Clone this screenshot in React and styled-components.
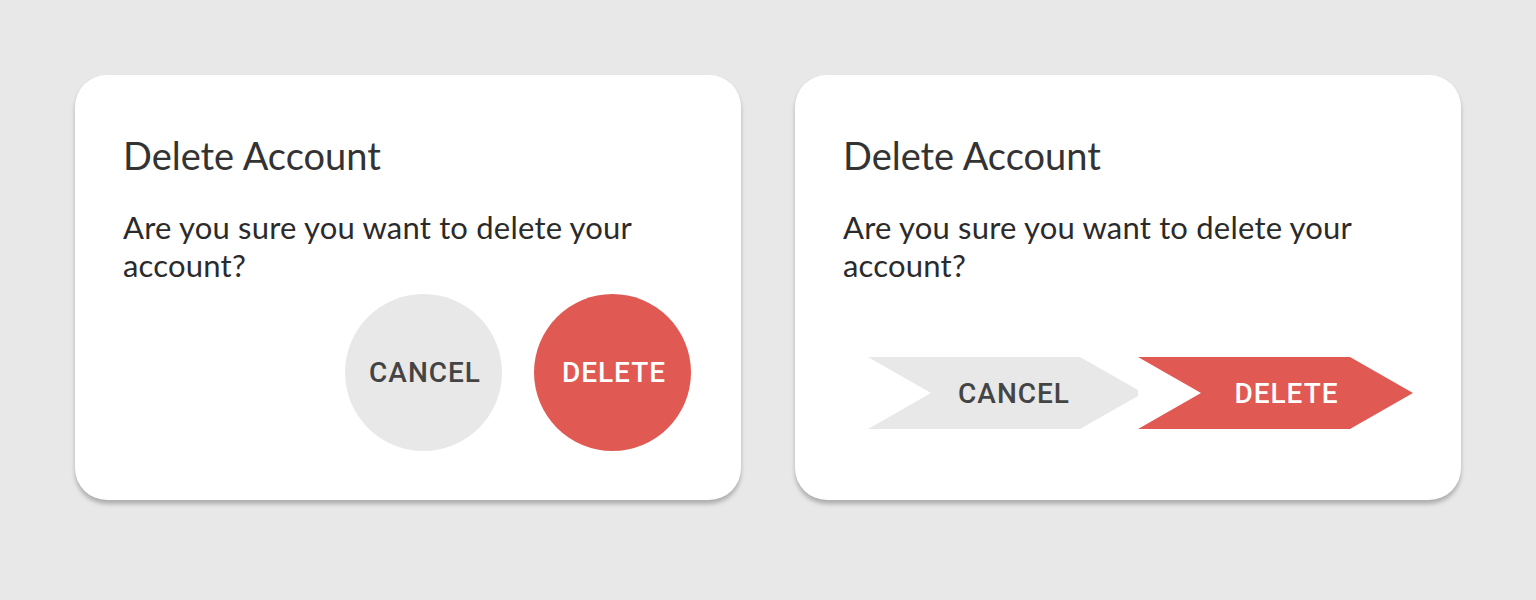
import React from "react";
import styled, { createGlobalStyle } from "styled-components";

const Global = createGlobalStyle`
  html, body { margin: 0; padding: 0; background: #e8e8e8; }
  body { font-family: Lato, "Open Sans", sans-serif; }
`;

const Page = styled.div`
  width: 1536px;
  height: 600px;
  box-sizing: border-box;
  padding-top: 75px;
  display: flex;
  justify-content: center;
  align-items: flex-start;
  gap: 54px;
  background: #e8e8e8;
`;

const Card = styled.div`
  width: 666px;
  height: 425px;
  box-sizing: border-box;
  padding: 48px;
  background: #ffffff;
  border-radius: 32px;
  box-shadow: 0 4px 4px rgba(0, 0, 0, 0.25);
  display: flex;
  flex-direction: column;
`;

const Title = styled.h2`
  margin: 9px 0 0;
  font-family: Lato, sans-serif;
  font-weight: 400;
  font-size: 38px;
  line-height: 46px;
  color: #333333;
`;

const Body = styled.p`
  margin: 30px 0 0;
  font-family: Lato, sans-serif;
  font-weight: 400;
  font-size: 31px;
  letter-spacing: 0.2px;
  line-height: 38px;
  color: #2b2b2b;
`;

const Actions = styled.div`
  display: flex;
  justify-content: flex-end;
  margin-top: ${(p) => p.$top}px;
  margin-right: ${(p) => p.$right || 0}px;
  gap: ${(p) => p.$gap || 0}px;
`;

const BaseLabel = `
  font-family: Roboto, "Liberation Sans", sans-serif;
  font-weight: 500;
  font-size: 28px;
  letter-spacing: 1px;
  border: none;
  cursor: pointer;
  display: flex;
  align-items: center;
  justify-content: center;
  padding: 0;
`;

const CircleButton = styled.button`
  ${BaseLabel}
  width: 157px;
  height: 157px;
  border-radius: 50%;
  padding-left: 3px;
  background: ${(p) => (p.$danger ? "#e05a53" : "#e8e8e8")};
  color: ${(p) => (p.$danger ? "#ffffff" : "#444444")};
`;

const ArrowButton = styled.button`
  ${BaseLabel}
  height: 72px;
  width: ${(p) => (p.$danger ? 275 : 270)}px;
  padding-left: 22px;
  background: ${(p) => (p.$danger ? "#e05a53" : "#e8e8e8")};
  color: ${(p) => (p.$danger ? "#ffffff" : "#444444")};
  clip-path: ${(p) =>
    p.$danger
      ? "polygon(0 0, 212px 0, 100% 50%, 212px 100%, 0 100%, 63px 50%)"
      : "polygon(0 0, 212px 0, 270px 33px, 270px 39px, 212px 100%, 0 100%, 63px 50%)"};
`;

export default function App() {
  return (
    <>
      <Global />
      <Page>
        <Card>
          <Title>Delete Account</Title>
          <Body>Are you sure you want to delete your account?</Body>
          <Actions $top={10} $gap={32} $right={2}>
            <CircleButton>CANCEL</CircleButton>
            <CircleButton $danger>DELETE</CircleButton>
          </Actions>
        </Card>
        <Card>
          <Title>Delete Account</Title>
          <Body>Are you sure you want to delete your account?</Body>
          <Actions $top={73}>
            <ArrowButton>CANCEL</ArrowButton>
            <ArrowButton $danger>DELETE</ArrowButton>
          </Actions>
        </Card>
      </Page>
    </>
  );
}
